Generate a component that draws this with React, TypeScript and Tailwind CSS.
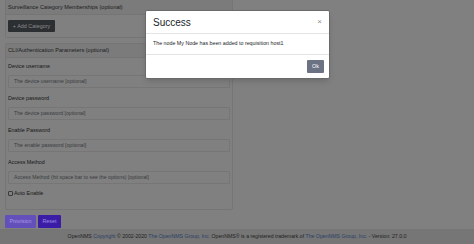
import React from "react";

const font = "font-['Liberation_Sans','Helvetica','Arial',sans-serif]";

function Field({ label, placeholder }: { label: string; placeholder: string }) {
  return (
    <div className="mb-[7px]">
      <div className="h-[7px] text-[5.4px] leading-[7px] text-[#161819]">{label}</div>
      <div className="mt-[5px] flex h-[13px] items-center rounded-[1px] border border-[#767676] bg-[#808080] px-[5px] text-[5.2px] text-[#3a3d40]">
        {placeholder}
      </div>
    </div>
  );
}

export default function App() {
  return (
    <div className={`relative flex h-[244px] w-[474px] flex-col overflow-hidden bg-[#808080] ${font}`}>
      <main className="flex-1 pl-[5px]">
        <div className="w-[228px]">
          {/* surveillance categories */}
          <div className="rounded-b-[2px] border-x border-b border-[#757575]">
            <div className="flex h-[15px] items-center border-b border-[#757575] bg-[#7b7b7b] px-[2px] text-[5.6px] text-[#1c1d1e]">
              Surveillance Category Memberships (optional)
            </div>
            <div className="px-[2px] pb-[5px] pt-[5px]">
              <button className="flex h-[12px] w-[47px] items-center justify-center rounded-[1px] bg-[#2c2f32] text-[5.4px] text-[#8a8c8e]">
                + Add Category
              </button>
            </div>
          </div>

          {/* cli auth */}
          <div className="mt-[5px] rounded-[2px] border border-[#757575]">
            <div className="flex h-[14px] items-center border-b border-[#757575] bg-[#7b7b7b] px-[2px] text-[5.6px] text-[#1c1d1e]">
              CLI/Authentication Parameters (optional)
            </div>
            <div className="px-[2px] pb-[12px] pt-[5px]">
              <Field label="Device username" placeholder="The device username [optional]" />
              <Field label="Device password" placeholder="The device password [optional]" />
              <Field label="Enable Password" placeholder="The enable password [optional]" />
              <Field label="Access Method" placeholder="Access Method (hit space bar to see the options) [optional]" />
              <label className="-mt-[1px] flex h-[7px] items-center gap-[1px] text-[5.4px] text-[#161819]">
                <span className="inline-block h-[5px] w-[5px] rounded-[1px] border border-[#3a3a3a] bg-[#808080]" />
                Auto Enable
              </label>
            </div>
          </div>

          <div className="mt-[5px] flex gap-[2px] pl-0">
            <button className="flex h-[13px] w-[31px] items-center justify-center rounded-[1px] bg-[#6450bb] text-[5.4px] text-[#a89ae0]">
              Provision
            </button>
            <button className="flex h-[13px] w-[23px] items-center justify-center rounded-[1px] bg-[#3b1ca6] text-[5.4px] text-[#9d8fe0]">
              Reset
            </button>
          </div>
        </div>
      </main>

      <footer className="flex h-[15px] items-center justify-center bg-[#767676] text-[5.2px] text-[#1e1f20]">
        <span>
          OpenNMS <span className="text-[#2a3f66]">Copyright</span> © 2002-2020{" "}
          <span className="text-[#2a3f66]">The OpenNMS Group, Inc.</span> OpenNMS® is a registered trademark of{" "}
          <span className="text-[#2a3f66]">The OpenNMS Group, Inc.</span> - Version: 27.0.0
        </span>
      </footer>

      {/* modal */}
      <div className="absolute left-[145px] top-[10px] flex h-[69px] w-[185px] flex-col rounded-[2px] border border-[#6a6a6a] bg-white shadow-md">
        <div className="flex h-[23px] items-center justify-between border-b border-[#e4e4e4] px-[7px]">
          <span className="text-[10px] text-[#212529]">Success</span>
          <span className="text-[8px] leading-none text-[#8a8a8a]">×</span>
        </div>
        <div className="flex h-[20px] items-center px-[7px] text-[5.3px] text-[#212529]">
          The node My Node has been added to requisition host1
        </div>
        <div className="flex flex-1 items-center justify-end border-t border-[#e4e4e4] px-[5px]">
          <button className="flex h-[13px] w-[17px] items-center justify-center rounded-[1px] bg-[#6b7283] text-[5.4px] text-white">
            Ok
          </button>
        </div>
      </div>
    </div>
  );
}
